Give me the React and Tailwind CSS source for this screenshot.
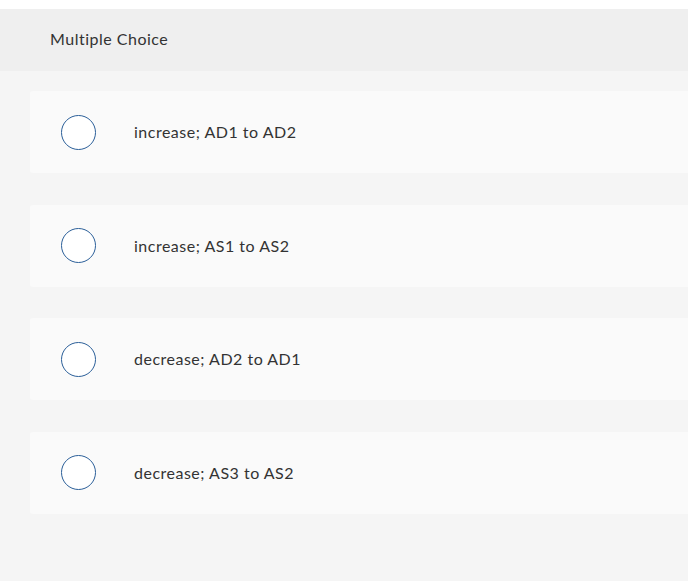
import React from 'react';

const choices = [
  'increase; AD1 to AD2',
  'increase; AS1 to AS2',
  'decrease; AD2 to AD1',
  'decrease; AS3 to AS2',
];

const Choice = ({ label }) => (
  <div className="flex items-center h-[82px] bg-[#fafafa] rounded-l-[3px]">
    <span className="ml-[31px] w-[35px] h-[35px] rounded-full border border-[#2b5f99] bg-white shrink-0" />
    <span className="ml-[38px] text-[16px] tracking-[0.5px] text-[#333]">{label}</span>
  </div>
);

export default function App() {
  return (
    <div
      className="w-[688px] h-[581px] bg-white overflow-hidden flex flex-col"
      style={{ fontFamily: 'Lato, "Open Sans", sans-serif' }}
    >
      <div className="mt-[9px] h-[62px] bg-[#efefef] flex items-center pl-[50px] pb-[3px]">
        <span className="text-[16px] tracking-[0.5px] text-[#333]">Multiple Choice</span>
      </div>
      <div className="flex-1 bg-[#f5f5f5] pl-[30px] pt-[20px] flex flex-col gap-[31.5px]">
        {choices.map((c) => (
          <Choice key={c} label={c} />
        ))}
      </div>
    </div>
  );
}
